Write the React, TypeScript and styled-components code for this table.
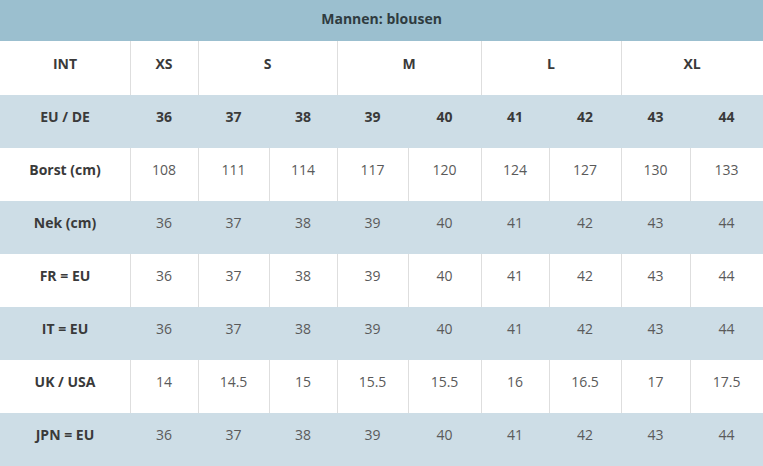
import React from "react";
import styled, { createGlobalStyle } from "styled-components";

const GlobalStyle = createGlobalStyle`
	html, body {
		margin: 0;
		padding: 0;
		background: #ffffff;
	}
	body {
		font-family: "Open Sans", "Liberation Sans", Arial, sans-serif;
	}
`;

const Table = styled.table`
	width: 763px;
	table-layout: fixed;
	border-collapse: collapse;
	border-spacing: 0;
	font-size: 14px;
	color: #555555;
`;

const TitleRow = styled.tr`
	height: 41px;
	background-color: #9bbfcf;
`;

const TitleCell = styled.th`
	padding: 0 0 4px;
	color: #2f3b40;
	font-weight: 700;
	font-size: 14px;
	text-align: center;
	vertical-align: middle;
`;

const Row = styled.tr<{ $shaded?: boolean; $height?: number }>`
	height: ${(p) => p.$height ?? 53}px;
	background-color: ${(p) => (p.$shaded ? "#cddde6" : "#ffffff")};
`;

const Cell = styled.td<{ $bold?: boolean; $shaded?: boolean }>`
	padding: 0 0 10px;
	text-align: center;
	vertical-align: middle;
	font-weight: ${(p) => (p.$bold ? 700 : 400)};
	color: ${(p) => (p.$bold ? "#3a3a3a" : "#5a5a5a")};
	box-shadow: ${(p) => (p.$shaded ? "none" : "inset 1px 0 0 #dedede")};

	&:first-child {
		box-shadow: none;
	}
`;

const widths = [130, 68, 71, 68, 71, 73, 68, 72, 69, 73];

const sizes: [string, number][] = [
	["XS", 1],
	["S", 2],
	["M", 2],
	["L", 2],
	["XL", 2],
];

const rows: { label: string; values: string[]; bold?: boolean }[] = [
	{ label: "EU / DE", values: ["36", "37", "38", "39", "40", "41", "42", "43", "44"], bold: true },
	{ label: "Borst (cm)", values: ["108", "111", "114", "117", "120", "124", "127", "130", "133"] },
	{ label: "Nek (cm)", values: ["36", "37", "38", "39", "40", "41", "42", "43", "44"] },
	{ label: "FR = EU", values: ["36", "37", "38", "39", "40", "41", "42", "43", "44"] },
	{ label: "IT = EU", values: ["36", "37", "38", "39", "40", "41", "42", "43", "44"] },
	{ label: "UK / USA", values: ["14", "14.5", "15", "15.5", "15.5", "16", "16.5", "17", "17.5"] },
	{ label: "JPN = EU", values: ["36", "37", "38", "39", "40", "41", "42", "43", "44"] },
];

const App = () => {
	return (
		<>
			<GlobalStyle />
			<Table>
				<colgroup>
					{widths.map((w, i) => (
						<col key={i} style={{ width: w }} />
					))}
				</colgroup>
				<thead>
					<TitleRow>
						<TitleCell colSpan={10}>Mannen: blousen</TitleCell>
					</TitleRow>
				</thead>
				<tbody>
					<Row $height={54}>
						<Cell $bold>INT</Cell>
						{sizes.map(([name, span]) => (
							<Cell key={name} $bold colSpan={span}>
								{name}
							</Cell>
						))}
					</Row>
					{rows.map((row, i) => {
						const shaded = i % 2 === 0;
						return (
							<Row key={row.label} $shaded={shaded}>
								<Cell $bold $shaded={shaded}>
									{row.label}
								</Cell>
								{row.values.map((v, j) => (
									<Cell key={j} $bold={row.bold} $shaded={shaded}>
										{v}
									</Cell>
								))}
							</Row>
						);
					})}
				</tbody>
			</Table>
		</>
	);
};

export default App;
